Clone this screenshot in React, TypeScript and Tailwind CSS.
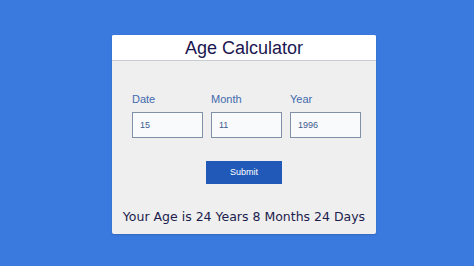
export default function App() {
  const fields = [
    { label: "Date", value: "15" },
    { label: "Month", value: "11" },
    { label: "Year", value: "1996" },
  ];
  return (
    <div className="flex h-[266px] w-[474px] items-start bg-[#3a7ade] pl-[112px] pt-[35px] font-['Liberation_Sans',Arial,sans-serif]">
      <div className="flex h-[199px] w-[264px] flex-col overflow-hidden rounded-[2px] bg-[#efefef] shadow-[0_1px_2px_rgba(0,0,0,0.15)]">
        <div className="flex h-[26px] items-center justify-center border-b border-[#c9ccd3] bg-white">
          <h1 className="text-[18px] leading-none text-[#1b1650]">Age Calculator</h1>
        </div>
        <div className="flex gap-[8px] pl-[20px] pt-[32px]">
          {fields.map((f) => (
            <div key={f.label} className="flex flex-col">
              <span className="text-[11px] leading-[13px] text-[#3f6aad]">{f.label}</span>
              <input
                readOnly
                value={f.value}
                className="mt-[6px] h-[26px] w-[71px] border border-[#7f90a8] bg-[#f9fafc] px-[7px] text-[9px] text-[#3d5b8c] outline-none"
              />
            </div>
          ))}
        </div>
        <div className="flex justify-center pt-[23px]">
          <button type="button" className="h-[23px] w-[76px] bg-[#2159b9] text-[9px] text-white">
            Submit
          </button>
        </div>
        <p className="mt-[24px] text-center font-['DejaVu_Sans',Verdana,sans-serif] text-[12.5px] text-[#1c1c4d]">
          Your Age is 24 Years 8 Months 24 Days
        </p>
      </div>
    </div>
  );
}
